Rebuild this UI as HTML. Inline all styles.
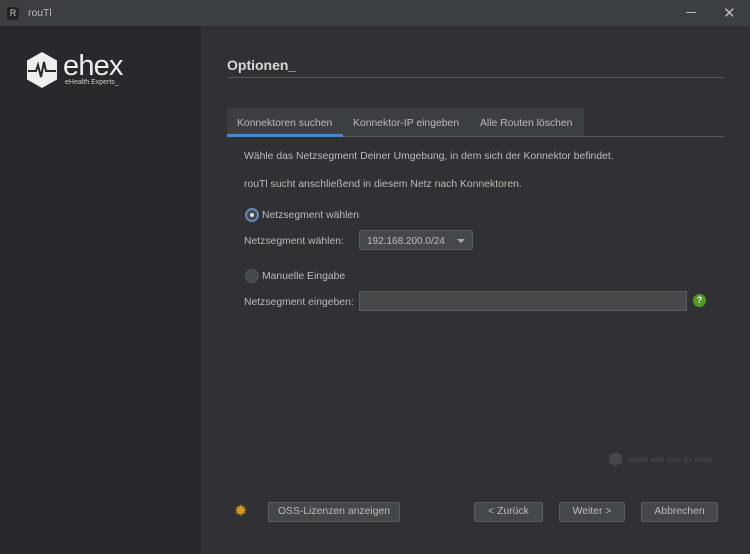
<!DOCTYPE html>
<html><head><meta charset="utf-8"><style>
*{box-sizing:border-box;margin:0;padding:0}
body{width:750px;height:554px;overflow:hidden;background:#313135;font-family:"Liberation Sans",sans-serif;font-size:10.4px;color:#bbbbbb;position:relative}
.abs{position:absolute}
.btn{position:absolute;top:502px;height:20px;background:#45484a;border:1px solid #5a5d5f;border-radius:2px;color:#bbb;font-size:10.4px;text-align:center;line-height:18px}
</style></head><body>
<div class="abs" style="left:0;top:0;width:750px;height:26px;background:#3c3f41"></div>
<div class="abs" style="left:7px;top:7px;width:12px;height:13px;background:#222;border-radius:3px;color:#ccc;font-size:9px;text-align:center;line-height:13px">R</div>
<div class="abs" style="left:28px;top:8px;color:#bbb;font-size:10.4px">rouTl</div>
<div class="abs" style="left:686px;top:12px;width:10px;height:1px;background:#bbb"></div>
<div class="abs" style="left:723px;top:4px;color:#bbb;font-size:15px">✕</div>
<div class="abs" style="left:0;top:26px;width:201px;height:528px;background:#29292d"></div>
<svg class="abs" style="left:25px;top:51px" width="34" height="38" viewBox="0 0 34 38"><polygon points="17,1 32,9.5 32,28.5 17,37 2,28.5 2,9.5" fill="#eee"/><polyline points="3,20 11,20 13,14 16,26 19,11 21,20 31,20" fill="none" stroke="#29292d" stroke-width="2"/></svg>
<div class="abs" style="left:63px;top:50px;color:#eee;font-size:29px;letter-spacing:-0.8px">ehex</div>
<div class="abs" style="left:65px;top:79px;color:#ccc;font-size:7px">eHealth Experts_</div>
<div class="abs" style="left:227px;top:57px;color:#d8d8d8;font-size:14px;font-weight:bold">Optionen_</div>
<div class="abs" style="left:227px;top:77px;width:497px;height:1px;background:#555"></div>
<div class="abs" style="left:227px;top:108px;width:357px;height:28px;background:#3c3f41"></div>
<div class="abs" style="left:227px;top:136px;width:497px;height:1px;background:#555"></div>
<div class="abs" style="left:227px;top:134px;width:116px;height:3px;background:#4a88c7"></div>
<div class="abs" style="left:237px;top:118px">Konnektoren suchen</div>
<div class="abs" style="left:353px;top:118px">Konnektor-IP eingeben</div>
<div class="abs" style="left:480px;top:118px">Alle Routen löschen</div>
<div class="abs" style="left:244px;top:151px">Wähle das Netzsegment Deiner Umgebung, in dem sich der Konnektor befindet.</div>
<div class="abs" style="left:244px;top:179px">rouTl sucht anschließend in diesem Netz nach Konnektoren.</div>
<div class="abs" style="left:245px;top:208px;width:14px;height:14px;border-radius:50%;background:#45484a;border:2px solid #5f8ab8"></div>
<div class="abs" style="left:250px;top:213px;width:4px;height:4px;border-radius:50%;background:#ddd"></div>
<div class="abs" style="left:262px;top:210px">Netzsegment wählen</div>
<div class="abs" style="left:244px;top:236px">Netzsegment wählen:</div>
<div class="abs" style="left:359px;top:230px;width:114px;height:20px;background:#45484a;border:1px solid #5a5d5f;border-radius:2px"></div>
<div class="abs" style="left:367px;top:236px;font-size:10px">192.168.200.0/24</div>
<div class="abs" style="left:457px;top:239px;width:0;height:0;border-left:4px solid transparent;border-right:4px solid transparent;border-top:4px solid #aaa"></div>
<div class="abs" style="left:245px;top:269px;width:14px;height:14px;border-radius:50%;background:#45484a;border:1px solid #555"></div>
<div class="abs" style="left:262px;top:271px">Manuelle Eingabe</div>
<div class="abs" style="left:244px;top:297px">Netzsegment eingeben:</div>
<div class="abs" style="left:359px;top:291px;width:328px;height:20px;background:#45494a;border:1px solid #5a5d5f"></div>
<div class="abs" style="left:693px;top:294px;width:13px;height:13px;border-radius:50%;background:#4f9a20;color:#fff;font-size:9px;font-weight:bold;text-align:center;line-height:13px">?</div>
<svg class="abs" style="left:609px;top:452px" width="13" height="14" viewBox="0 0 13 14"><polygon points="6.5,0 13,3.5 13,10.5 6.5,14 0,10.5 0,3.5" fill="#48484c"/></svg>
<div class="abs" style="left:628px;top:455px;color:#4c4c50;font-size:8px">made with love by ehex</div>
<div class="abs" style="left:234px;top:502px;color:#d39a17;font-size:16px;line-height:20px">✹</div>
<div class="btn" style="left:268px;width:132px">OSS-Lizenzen anzeigen</div>
<div class="btn" style="left:474px;width:69px">&lt; Zurück</div>
<div class="btn" style="left:559px;width:66px">Weiter &gt;</div>
<div class="btn" style="left:641px;width:77px">Abbrechen</div>
</body></html>
